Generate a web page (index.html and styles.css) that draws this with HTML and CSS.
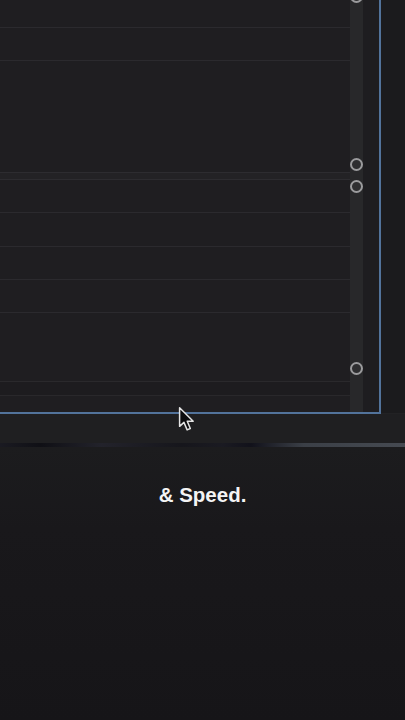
FILE: index.html
```html
<!DOCTYPE html>
<html>
<head>
<meta charset="utf-8">
<link rel="stylesheet" href="styles.css">
</head>
<body>
<div class="screen">
  <div class="top">
    <div class="upper">
      <div class="panel">
        <div class="rows">
          <div class="row h27"></div>
          <div class="row h33"></div>
          <div class="row h113"></div>
          <div class="band"></div>
          <div class="row h32"></div>
          <div class="row h34"></div>
          <div class="row h33"></div>
          <div class="row h33"></div>
          <div class="row h69"></div>
          <div class="row band2"></div>
          <div class="row last"></div>
        </div>
        <div class="track">
          <span class="knob k0"></span>
          <span class="knob k1"></span>
          <span class="knob k2"></span>
          <span class="knob k3"></span>
        </div>
        <div class="inner-gap"></div>
      </div>
      <div class="gutter"></div>
    </div>
    <div class="under"></div>
    <div class="seam"></div>
    <svg class="cursor" width="17" height="28" viewBox="0 0 16 26">
      <path d="M1.5 1.5 L1.5 19 L5.6 15.2 L8.6 22.3 L11.6 21 L8.7 14.2 L14.3 14.2 Z" fill="#0c0c0e" stroke="#e4e4e4" stroke-width="1.4" stroke-linejoin="round"/>
    </svg>
  </div>
  <div class="bottom">
    <p class="caption">&amp; Speed.</p>
  </div>
</div>
</body>
</html>
```

FILE: styles.css
```css
html, body {
  margin: 0;
  padding: 0;
  background: #19181b;
}
.screen {
  width: 405px;
  height: 720px;
  display: flex;
  flex-direction: column;
  overflow: hidden;
  font-family: "Liberation Sans", Arial, sans-serif;
}
.top {
  position: relative;
  display: flex;
  flex-direction: column;
  background: #1e1e20;
}
.upper {
  display: flex;
  height: 414px;
}
.panel {
  width: 379px;
  height: 412px;
  display: flex;
  background: #1f1e21;
  border-right: 2px solid #52739b;
  border-bottom: 2px solid #52739b;
}
.rows {
  width: 350px;
  display: flex;
  flex-direction: column;
}
.row {
  border-bottom: 1px solid #2b2a2e;
  box-sizing: border-box;
}
.h27 { height: 28px; }
.h33 { height: 33px; }
.h113 { height: 112px; border-bottom: 1px solid #2d2c30; }
.band {
  height: 7px;
  background: #232225;
  border-bottom: 1px solid #2d2c30;
  box-sizing: border-box;
}
.h32 { height: 33px; }
.h34 { height: 34px; }
.h69 { height: 69px; border-bottom-color: #2a292c; }
.band2 {
  height: 14px;
  background: #1d1c1f;
  border-bottom: 1px solid #29282b;
}
.last { flex: 1; border-bottom: none; }
.track {
  position: relative;
  width: 13px;
  background: #28282a;
}
.knob {
  position: absolute;
  left: -0.5px;
  width: 9px;
  height: 9px;
  border: 2.5px solid #9b9b9d;
  border-radius: 50%;
  background: #2e2e30;
}
.k0 { top: -10px; }
.k1 { top: 158px; }
.k2 { top: 180px; }
.k3 { top: 362px; }
.inner-gap {
  flex: 1;
  background: #1e1d20;
}
.gutter {
  flex: 1;
  background: #1b1b1d;
  border-bottom: 1px solid #222224;
}
.under {
  height: 29px;
  background: #1f1f21;
}
.seam {
  height: 4px;
  background: linear-gradient(90deg, #1a1a22 0%, #0e0e14 10%, #23232c 25%, #15151b 45%, #1a1a22 55%, #10101a 62%, #3e434b 75%, #4a4f57 100%);
  opacity: 0.9;
}
.cursor {
  position: absolute;
  left: 178px;
  top: 406px;
}
.bottom {
  flex: 1;
  background: linear-gradient(180deg, #1c1c1e 0%, #19181b 30%, #161518 100%);
  display: flex;
  justify-content: center;
}
.caption {
  margin: 36px 0 0 0;
  color: #f4f4f4;
  font-size: 20.5px;
  font-weight: bold;
  line-height: 24px;
}
```
